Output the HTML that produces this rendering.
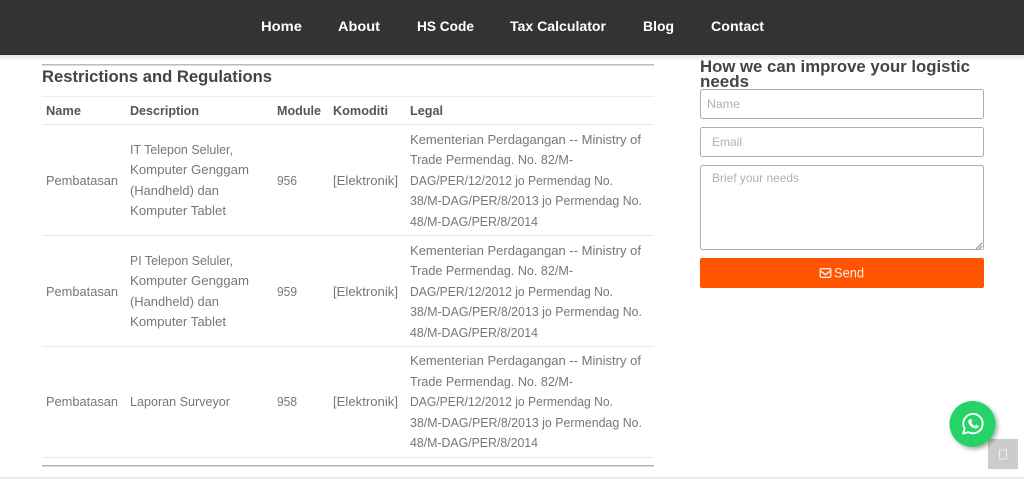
<!DOCTYPE html>
<html><head><meta charset="utf-8"><style>
html,body{margin:0;padding:0;width:1024px;height:479px;overflow:hidden;background:#fff}
svg{display:block;position:absolute;left:0;top:0}
text{font-family:"Liberation Sans",sans-serif}
.n{font-size:14px;font-weight:700;fill:#fff}
.t{font-size:13px;fill:#777}
.h{font-size:12.5px;font-weight:700;fill:#555}
.b{font-size:17px;font-weight:700;fill:#444}
.p{font-size:12px;fill:#b0b0b0}
</style></head><body>
<svg width="1024" height="479" viewBox="0 0 1024 479" xmlns="http://www.w3.org/2000/svg">
<defs>
<filter id="s" x="-30%" y="-30%" width="170%" height="170%"><feDropShadow dx="2" dy="2" stdDeviation="2" flood-color="#000" flood-opacity=".35"/></filter>
<linearGradient id="g" x1="0" y1="0" x2="0" y2="1"><stop offset="0" stop-color="#000" stop-opacity=".12"/><stop offset="1" stop-color="#000" stop-opacity="0"/></linearGradient>
</defs>
<rect width="1024" height="479" fill="#fff"/>
<rect y="55" width="1024" height="6" fill="url(#g)"/>
<rect width="1024" height="55" fill="#333"/>
<g class="n">
<text class="n" x="261" y="31" textLength="41" lengthAdjust="spacingAndGlyphs">Home</text>
<text class="n" x="338" y="31" textLength="42" lengthAdjust="spacingAndGlyphs">About</text>
<text class="n" x="417" y="31" textLength="57" lengthAdjust="spacingAndGlyphs">HS Code</text>
<text class="n" x="510" y="31" textLength="96" lengthAdjust="spacingAndGlyphs">Tax Calculator</text>
<text class="n" x="643" y="31" textLength="31" lengthAdjust="spacingAndGlyphs">Blog</text>
<text class="n" x="711" y="31" textLength="53" lengthAdjust="spacingAndGlyphs">Contact</text>
</g>
<rect x="42" y="64" width="612" height="1.5" fill="#bbb"/>
<text class="b" x="42" y="82" textLength="230" lengthAdjust="spacingAndGlyphs">Restrictions and Regulations</text>
<rect x="42" y="96" width="612" height="1" fill="#eee"/>
<text class="h" x="46" y="115" textLength="35" lengthAdjust="spacingAndGlyphs">Name</text>
<text class="h" x="130" y="115" textLength="69" lengthAdjust="spacingAndGlyphs">Description</text>
<text class="h" x="277" y="115" textLength="44" lengthAdjust="spacingAndGlyphs">Module</text>
<text class="h" x="333" y="115" textLength="55" lengthAdjust="spacingAndGlyphs">Komoditi</text>
<text class="h" x="410" y="115" textLength="33" lengthAdjust="spacingAndGlyphs">Legal</text>
<rect x="42" y="124" width="612" height="1" fill="#e8e8e8"/>

<text class="t" x="46" y="185" textLength="72" lengthAdjust="spacingAndGlyphs">Pembatasan</text>
<text class="t" x="130" y="154" textLength="103" lengthAdjust="spacingAndGlyphs">IT Telepon Seluler,</text>
<text class="t" x="130" y="174" textLength="119" lengthAdjust="spacingAndGlyphs">Komputer Genggam</text>
<text class="t" x="130" y="195" textLength="89" lengthAdjust="spacingAndGlyphs">(Handheld) dan</text>
<text class="t" x="130" y="215" textLength="96" lengthAdjust="spacingAndGlyphs">Komputer Tablet</text>
<text class="t" x="277" y="185" textLength="20" lengthAdjust="spacingAndGlyphs">956</text>
<text class="t" x="333" y="185" textLength="65" lengthAdjust="spacingAndGlyphs">[Elektronik]</text>
<text class="t" x="410" y="144" textLength="231" lengthAdjust="spacingAndGlyphs">Kementerian Perdagangan -- Ministry of</text>
<text class="t" x="410" y="164" textLength="163" lengthAdjust="spacingAndGlyphs">Trade Permendag. No. 82/M-</text>
<text class="t" x="410" y="185" textLength="203" lengthAdjust="spacingAndGlyphs">DAG/PER/12/2012 jo Permendag No.</text>
<text class="t" x="410" y="205" textLength="232" lengthAdjust="spacingAndGlyphs">38/M-DAG/PER/8/2013 jo Permendag No.</text>
<text class="t" x="410" y="226" textLength="128" lengthAdjust="spacingAndGlyphs">48/M-DAG/PER/8/2014</text>
<rect x="42" y="235" width="612" height="1" fill="#e8e8e8"/>

<text class="t" x="46" y="296" textLength="72" lengthAdjust="spacingAndGlyphs">Pembatasan</text>
<text class="t" x="130" y="265" textLength="103" lengthAdjust="spacingAndGlyphs">PI Telepon Seluler,</text>
<text class="t" x="130" y="285" textLength="119" lengthAdjust="spacingAndGlyphs">Komputer Genggam</text>
<text class="t" x="130" y="306" textLength="89" lengthAdjust="spacingAndGlyphs">(Handheld) dan</text>
<text class="t" x="130" y="326" textLength="96" lengthAdjust="spacingAndGlyphs">Komputer Tablet</text>
<text class="t" x="277" y="296" textLength="20" lengthAdjust="spacingAndGlyphs">959</text>
<text class="t" x="333" y="296" textLength="65" lengthAdjust="spacingAndGlyphs">[Elektronik]</text>
<text class="t" x="410" y="255" textLength="231" lengthAdjust="spacingAndGlyphs">Kementerian Perdagangan -- Ministry of</text>
<text class="t" x="410" y="275" textLength="163" lengthAdjust="spacingAndGlyphs">Trade Permendag. No. 82/M-</text>
<text class="t" x="410" y="296" textLength="203" lengthAdjust="spacingAndGlyphs">DAG/PER/12/2012 jo Permendag No.</text>
<text class="t" x="410" y="316" textLength="232" lengthAdjust="spacingAndGlyphs">38/M-DAG/PER/8/2013 jo Permendag No.</text>
<text class="t" x="410" y="337" textLength="128" lengthAdjust="spacingAndGlyphs">48/M-DAG/PER/8/2014</text>
<rect x="42" y="346" width="612" height="1" fill="#e8e8e8"/>

<text class="t" x="46" y="406" textLength="72" lengthAdjust="spacingAndGlyphs">Pembatasan</text>
<text class="t" x="130" y="406" textLength="100" lengthAdjust="spacingAndGlyphs">Laporan Surveyor</text>
<text class="t" x="277" y="406" textLength="20" lengthAdjust="spacingAndGlyphs">958</text>
<text class="t" x="333" y="406" textLength="65" lengthAdjust="spacingAndGlyphs">[Elektronik]</text>
<text class="t" x="410" y="365" textLength="231" lengthAdjust="spacingAndGlyphs">Kementerian Perdagangan -- Ministry of</text>
<text class="t" x="410" y="386" textLength="163" lengthAdjust="spacingAndGlyphs">Trade Permendag. No. 82/M-</text>
<text class="t" x="410" y="406" textLength="203" lengthAdjust="spacingAndGlyphs">DAG/PER/12/2012 jo Permendag No.</text>
<text class="t" x="410" y="427" textLength="232" lengthAdjust="spacingAndGlyphs">38/M-DAG/PER/8/2013 jo Permendag No.</text>
<text class="t" x="410" y="447" textLength="128" lengthAdjust="spacingAndGlyphs">48/M-DAG/PER/8/2014</text>
<rect x="42" y="457" width="612" height="1" fill="#e8e8e8"/>
<rect x="42" y="465" width="612" height="1.5" fill="#b4b4b4"/>

<text class="b" x="700" y="72" textLength="270" lengthAdjust="spacingAndGlyphs">How we can improve your logistic</text>
<text class="b" x="700" y="87" textLength="49" lengthAdjust="spacingAndGlyphs">needs</text>
<rect x="700.5" y="89.5" width="283" height="29" rx="2" fill="#fff" stroke="#a9afb5"/>
<text class="p" x="707" y="108" textLength="33" lengthAdjust="spacingAndGlyphs">Name</text>
<rect x="700.5" y="127.5" width="283" height="29" rx="2" fill="#fff" stroke="#a9afb5"/>
<text class="p" x="712" y="146" textLength="30" lengthAdjust="spacingAndGlyphs">Email</text>
<rect x="700.5" y="165.5" width="283" height="84" rx="2" fill="#fff" stroke="#a9afb5"/>
<text class="p" x="712" y="182" textLength="87" lengthAdjust="spacingAndGlyphs">Brief your needs</text>
<path d="M982 243l-6 6M982 246l-3 3" stroke="#888" stroke-width="1" fill="none"/>
<rect x="700" y="258" width="284" height="30" rx="2" fill="#f50"/>
<g fill="none" stroke="#ffe8dc" stroke-width="1.4">
<rect x="820.2" y="268.7" width="10.6" height="8.6" rx="1.2"/>
<path d="M820.5 271l5 3.6 5-3.6"/>
</g>
<text x="834" y="277.5" font-size="13.5" fill="#ffece2" textLength="30" lengthAdjust="spacingAndGlyphs">Send</text>

<rect y="477" width="1024" height="2" fill="#eeece4"/>
<rect x="988" y="439" width="30" height="30" fill="#ccc"/>
<rect x="999.5" y="450" width="7" height="9" fill="none" stroke="#eee" stroke-width="1"/>
<circle cx="972.5" cy="424" r="23" fill="#25d366" filter="url(#s)"/>
<path d="M963.2 433.6l1.4-5.1a9.7 9.7 0 1 1 3.7 3.6z" fill="none" stroke="#fff" stroke-width="1.9" stroke-linejoin="round"/>
<path d="M969.4 419.6c.5-.8 1.4-.9 1.8-.3l.8 1.4c.2.4 0 .8-.5 1.4-.2.3-.2.5 0 .9.7 1.2 1.6 2.1 2.9 2.7.4.2.6.1.9-.2.6-.7.9-.9 1.3-.7l1.5.8c.5.3.5.9.1 1.6-.6 1-2 1.6-3.3 1.2-3.3-.9-5.6-3.2-6.6-6-.3-1 0-2 .6-2.8z" fill="#fff"/>
</svg>
</body></html>
